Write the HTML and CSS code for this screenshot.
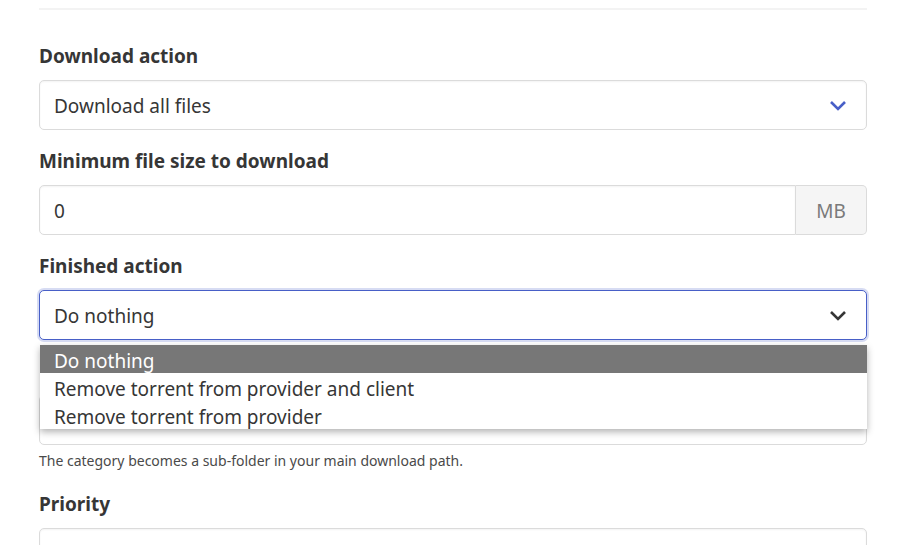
FILE: index.html
```html
<!DOCTYPE html>
<html lang="en">
<head>
<meta charset="utf-8">
<title>Torrent settings</title>
<link rel="stylesheet" href="styles.css">
</head>
<body>
<div class="page">
  <hr class="divider">

  <div class="field">
    <label class="label">Download action</label>
    <div class="select">
      <span class="select-value">Download all files</span>
      <svg class="chevron" width="18" height="12" viewBox="0 0 18 12"><polyline points="2,2 9,9 16,2" fill="none" stroke="#485fc7" stroke-width="2.6"/></svg>
    </div>
  </div>

  <div class="field">
    <label class="label">Minimum file size to download</label>
    <div class="addons">
      <div class="input input-left">0</div>
      <div class="addon">MB</div>
    </div>
  </div>

  <div class="field field-dropdown">
    <label class="label">Finished action</label>
    <div class="select is-focused">
      <span class="select-value">Do nothing</span>
      <svg class="chevron" width="18" height="12" viewBox="0 0 18 12"><polyline points="2,2 9,9 16,2" fill="none" stroke="#363636" stroke-width="2.6"/></svg>
    </div>
    <ul class="options">
      <li class="option is-selected">Do nothing</li>
      <li class="option">Remove torrent from provider and client</li>
      <li class="option">Remove torrent from provider</li>
    </ul>
  </div>

  <div class="field field-help">
    <div class="label-spacer"></div>
    <div class="input"></div>
    <p class="help">The category becomes a sub-folder in your main download path.</p>
  </div>

  <div class="field">
    <label class="label">Priority</label>
    <div class="input"></div>
  </div>
</div>
</body>
</html>
```

FILE: styles.css
```css
* { box-sizing: border-box; }

html, body {
  margin: 0;
  padding: 0;
  background: #ffffff;
}

body {
  font-family: "Noto Sans", "Open Sans", sans-serif;
  color: #363636;
  overflow: hidden;
  height: 545px;
}

.page {
  padding: 8px 39px 0 39px;
}

.divider {
  margin: 0 0 34px 0;
  height: 2px;
  border: none;
  background: #f3f3f3;
}

.field {
  margin-bottom: 19px;
}

.field-dropdown {
  position: relative;
}

.label {
  display: block;
  font-size: 19px;
  font-weight: 700;
  line-height: 24px;
  height: 30px;
  margin-bottom: 6px;
  color: #363636;
}

.label-spacer {
  height: 36px;
}

.select,
.input {
  height: 50px;
  border: 1px solid #dbdbdb;
  border-radius: 5px;
  background: #ffffff;
  box-shadow: inset 0 1px 2px rgba(10, 10, 10, 0.05);
  font-size: 19px;
  line-height: 46px;
  padding: 2px 14px 0 14px;
  color: #363636;
}

.select {
  display: flex;
  align-items: center;
  justify-content: space-between;
}

.select .chevron {
  margin-right: 5px;
  flex: none;
}

.select.is-focused {
  border-color: #485fc7;
  box-shadow: 0 0 0 2px rgba(72, 95, 199, 0.22);
}

.addons {
  display: flex;
}

.input-left {
  flex: 1;
  border-radius: 5px 0 0 5px;
}

.addon {
  width: 71px;
  height: 50px;
  border: 1px solid #dbdbdb;
  border-left: none;
  border-radius: 0 5px 5px 0;
  background: #f5f5f5;
  color: #7a7a7a;
  font-size: 19px;
  line-height: 46px;
  padding-top: 2px;
  text-align: center;
}

.options {
  position: absolute;
  top: 91px;
  left: 1px;
  right: 0;
  margin: 0;
  padding: 0;
  list-style: none;
  background: #ffffff;
  box-shadow: 0 3px 7px rgba(0, 0, 0, 0.3);
  z-index: 5;
}

.option {
  height: 28px;
  line-height: 28px;
  padding-top: 2px;
  font-size: 19px;
  padding-left: 14px;
  color: #363636;
}

.option.is-selected {
  background: #777777;
  color: #ffffff;
}

.help {
  margin: 6px 0 0 0;
  font-size: 14px;
  line-height: 20px;
  color: #4a4a4a;
}

.field-help {
  margin-bottom: 21px;
}
```
